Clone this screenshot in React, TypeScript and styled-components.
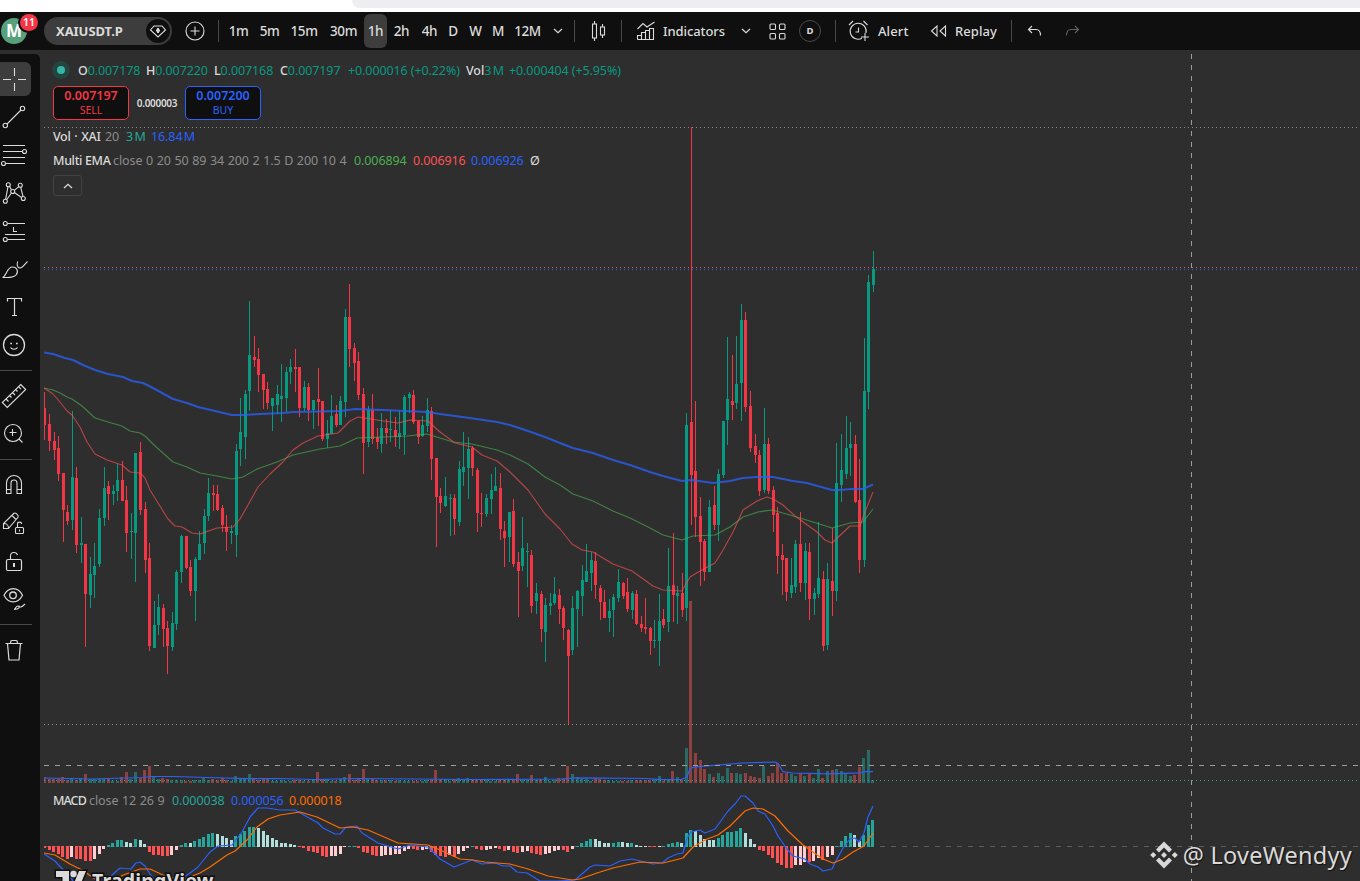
import type { ReactNode } from "react";
import styled, { createGlobalStyle } from "styled-components";

const GREEN = "#089981";
const RED = "#f23645";
const BLUE = "#2962ff";
const ORANGE = "#ff6d00";

// one candle per entry: direction, high, body top, body bottom, low
const CANDLES = `
r392,408,425,440 r414,424,441,451 r432,441,450,460 r436,448,474,481 r473,473,510,542 r505,512,521,525
g411,477,520,530 r467,478,545,553 g517,543,545,563 r544,544,594,647 g557,574,595,608 g543,566,575,598
g509,518,564,567 g467,488,518,526 r481,486,494,520 g485,491,494,505 g464,480,491,501 r461,480,501,501
r486,500,533,552 g513,531,532,559 g453,453,533,582 r442,452,510,515 r502,509,560,573 r543,558,646,651
g601,625,648,648 g594,607,625,635 r604,608,629,647 r621,628,646,674 g612,623,647,651 g570,572,624,630
g535,536,572,583 r536,536,568,569 r560,567,591,596 g557,559,591,621 g531,544,560,560 g509,516,543,554
g478,493,516,521 r485,493,495,511 r485,494,510,511 r505,508,525,532 r515,527,532,551 g525,531,533,544
g444,451,535,557 g398,432,449,466 g390,394,437,459 g301,355,391,411 r336,357,360,367 r348,359,375,392
r374,374,390,409 r382,389,403,409 g398,398,406,431 g385,394,405,414 g364,396,399,422 g367,372,398,412
g359,367,372,384 r349,367,369,392 r367,367,408,417 g381,387,408,411 r383,387,410,421 g400,400,410,429
r368,399,402,426 r401,401,439,441 g420,433,439,448 g395,416,434,434 r405,414,425,427 g396,401,425,425
g309,317,402,417 r284,317,349,367 r343,348,363,381 r352,361,395,400 r388,394,443,474 g406,410,442,447
r394,410,439,444 r428,437,442,449 g413,428,444,453 r419,428,433,444 g410,429,430,442 r417,430,437,447
g411,433,437,449 g395,397,435,455 g392,394,398,413 r390,395,422,424 r421,421,437,444 g416,425,436,437
g398,410,426,432 r407,411,459,480 r458,458,497,547 r488,496,503,513 g477,496,506,507 g494,498,499,536
r494,498,519,535 g461,469,522,526 g432,467,472,486 g437,449,468,499 r446,448,468,476 r468,470,513,532
r493,513,514,527 g494,498,514,517 g474,490,499,514 g467,486,491,491 r473,488,529,540 r521,531,538,567
g512,512,537,562 r499,511,564,567 r552,562,571,617 g517,548,566,571 g543,551,552,587 r550,555,606,613
g583,593,601,614 r591,594,629,642 g598,605,632,662 g593,603,606,615 g577,594,603,605 r589,595,609,624
r606,608,628,640 r629,630,656,724 g596,608,650,655 g590,591,609,647 g565,580,596,616 g544,571,582,582
g552,560,573,591 r552,561,585,599 r585,588,602,620 r590,602,618,618 g599,611,618,632 g594,597,610,637
g569,582,598,602 r582,583,596,599 r578,592,609,612 g591,593,610,619 r590,594,624,625 r616,624,628,632
r598,627,629,634 r627,628,641,655 g620,640,641,648 g594,621,641,666 r609,619,625,628 g548,586,622,632
r533,585,595,622 g586,593,596,624 r573,593,610,617 g413,425,608,621 r127,422,475,525 r401,471,517,537
r497,516,542,586 r539,541,572,581 g500,507,572,572 r486,505,525,530 g469,474,525,541 g421,421,475,478
g337,399,420,445 r355,401,405,420 g336,384,403,409 g304,320,383,421 r312,320,407,412 r391,406,448,452
r434,446,455,463 r450,455,491,496 g408,444,490,493 r438,444,491,494 r486,490,515,532 r507,513,556,574
r544,555,560,595 r558,558,592,601 g558,585,593,598 g540,544,587,593 r512,544,583,592 g543,551,583,600
r543,552,599,620 g588,593,599,615 g522,578,594,598 r571,579,646,651 g563,579,645,650 r528,581,591,616
g443,483,591,601 g434,470,485,502 g416,448,474,479 g422,444,448,476 r435,444,502,503 r459,500,560,573
g338,391,560,567 g275,282,392,409 g251,269,285,292`
  .trim()
  .split(/\s+/)
  .map((c) => {
    const [high, top, bottom, low] = c.slice(1).split(",").map(Number);
    return { up: c[0] === "g", high, top, bottom, low };
  });

const VOLUMES = [
  6, 4, 4, 4, 6, 3, 5, 3, 5, 9, 4, 4, 4, 4, 4, 2, 2, 6, 11, 4, 11, 5, 13, 17, 6, 4, 5, 4, 3, 3, 3,
  2, 2, 3, 3, 5, 3, 4, 3, 5, 3, 2, 7, 5, 5, 9, 4, 3, 5, 4, 2, 2, 3, 2, 2, 3, 3, 2, 2, 4, 11, 4, 4,
  2, 2, 4, 6, 9, 3, 4, 14, 5, 4, 3, 3, 3, 3, 2, 3, 2, 2, 2, 2, 2, 3, 4, 13, 4, 4, 2, 4, 5, 3, 5, 3,
  3, 3, 3, 2, 2, 4, 3, 3, 3, 9, 3, 3, 8, 3, 4, 6, 2, 3, 5, 4, 17, 9, 6, 4, 4, 2, 5, 4, 3, 3, 2, 2,
  2, 2, 3, 3, 3, 3, 3, 4, 7, 2, 3, 12, 6, 4, 35, 182, 30, 23, 14, 9, 6, 10, 7, 15, 10, 10, 9, 10,
  7, 6, 5, 17, 7, 10, 20, 10, 10, 9, 7, 10, 7, 10, 5, 14, 5, 12, 13, 14, 12, 10, 7, 8, 16, 25, 33, 3,
];

// histogram: colour key + height in thirds of a pixel (G/g rising/falling above, R/r below)
const HISTOGRAM = `
R5 R11 R17 R23 R32 R38 r32 R38 R38 R44 R44 r38 r23 r8 G7 G13 G22 G22 g16 g13 G25 g22 g10 R17 R26 R26
R29 R29 r26 r11 G7 G13 g13 G19 G25 G31 G40 G43 g40 g34 g28 g22 G34 G40 G49 G61 G61 g58 g49 g37 g28
g22 g13 g13 g10 g7 R3 R7 R14 R17 R20 R29 R32 r29 r29 r23 r3 G4 G4 R5 R17 R20 R26 R29 r29 r26 r26 r23
r23 r14 r8 R8 R11 r11 r8 R17 R26 R29 R32 r26 R33 r23 r14 r5 G2 R8 R11 r11 r8 r5 R8 R14 r11 R17 R20
r17 r14 R20 R23 R26 r23 r20 r14 r11 R11 R17 r8 G4 G13 G19 G25 g25 g19 g13 g13 G13 G16 g16 g13 G13 g7
g4 g2 R4 R4 r2 G2 G10 G13 G16 g13 G43 G52 g49 g37 g25 g22 g22 G28 G37 G46 G46 G49 G58 g43 g25 g10
R11 R14 R26 R35 R50 R56 R65 R65 r56 r56 r47 R47 r44 r35 R41 r32 r26 G2 G19 G34 G43 g37 g19 G37 G67
G82`
  .trim()
  .split(/\s+/)
  .map((h) => ({ key: h[0], size: Number(h.slice(1)) / 3 }));

const HIST_COLORS: Record<string, string> = {
  G: "#26a69a",
  g: "#b2dfdb",
  R: "#ff5252",
  r: "#ffcdd2",
};

const EMA_BLUE =
  "44,352.5 53,354 65,358 73,360 83,365 95,370 108,374 123,377 132,381 143,383 153,388 173,399 187,403 198,407 215,411 232,415 243,415 260,414 283,413 293,412 340,411 355,409 383,410 427,412 440,414 455,416 470,418 497,422 510,425 528,431 545,437 560,443 573,448 593,453 613,460 630,465 650,472 663,476 682,481 692,480 713,483 730,481 743,478 757,477 773,477 793,481 807,483 832,490 840,490 852,489 863,489 873,484.5";
const EMA_GREEN =
  "44,388 53,390 60,393 67,397 72,399 82,406 95,418 108,422 122,426 130,431 140,433 145,436 155,446 173,462 187,467 200,473 217,476 232,479 243,477 257,469 277,462 293,455 320,449 340,446 357,438 383,437 407,436 427,434 440,438 453,442 472,444 497,450 510,455 528,464 545,477 560,485 573,494 593,501 613,511 630,518 650,528 663,535 682,540 693,536 715,535 730,527 743,517 758,512 772,510 790,515 813,522 832,528 850,523 863,522 873,509";
const EMA_RED =
  "44,388 53,394 60,402 67,411 72,415 80,427 87,442 95,454 107,460 122,465 130,472 140,473 145,478 150,490 158,503 168,519 175,526 182,527 192,533 200,534 217,528 233,527 240,519 248,505 258,487 270,474 283,462 293,450 303,443 318,436 338,433 350,421 358,417 377,420 398,423 410,420 428,421 440,432 455,443 472,447 482,455 497,461 510,472 528,490 545,514 560,529 572,544 582,550 593,552 613,564 632,571 653,586 663,590 682,591 690,577 700,571 715,563 723,550 733,532 743,510 757,501 767,497 773,499 783,505 795,516 817,532 825,540 832,543 850,526 860,526 865,512 873,492";
const VOLUME_MA =
  "44,778 90,779 143,777.5 153,776.5 173,776.5 207,777.5 247,778.7 280,778.5 313,779.5 360,778.5 470,779.5 560,779 577,777.8 647,778.5 660,779.7 681,779.5 687,777 690,768.5 695,766.8 743,763 775,762 778,763.5 783,771.7 793,773 827,773.8 860,772.8 865,771.5 873,771.7";
const MACD_LINE =
  "44,854 55,861 65,872 76,884 100,886 112,875 120,868 131,869 136,863 140,862 145,866 152,877 160,884 180,880 190,873 198,867 210,852 218,846 232,845 242,832 250,817 258,808 267,808 280,810 295,810 302,814 318,823 323,828 335,834 340,834 346,827 357,826 362,833 378,843 398,849 410,845 428,847 440,859 454,867 472,860 482,864 495,863 503,866 510,866 517,872 527,873 540,881 557,881 575,880 590,867 595,865 610,866 620,861 632,859 653,864 662,863 668,858 677,854 683,853 687,838 691,832 700,830 705,833 715,829 728,811 735,804 741,796 745,796 753,803 758,811 765,814 773,826 778,836 787,849 793,856 805,859 810,864 818,867 823,871 832,869 837,859 843,848 850,839 855,838 859,842 864,833 868,817 873,806";
const SIGNAL_LINE =
  "44,853 55,855 70,864 82,870 95,879 105,884 115,880 123,875 140,869 150,869 163,875 173,878 185,879 200,873 210,867 227,855 235,851 247,840 257,827 268,819 280,815 300,812 317,817 340,828 353,827 368,830 398,843 428,845 440,850 460,859 473,860 485,862 510,864 528,869 548,876 572,880 580,879 597,873 613,868 640,862 663,863 683,858 693,847 707,839 718,835 730,826 745,811 753,808 763,809 775,816 788,831 803,845 823,859 833,863 843,859 853,852 864,846 873,833";

const PITCH = 4.5521;
const candleX = (i: number) => Math.floor(44.9 + PITCH * i);
const barX = (i: number) => Math.floor(44.5 + PITCH * i);

const INTERVALS = [
  { label: "1m", width: 31 },
  { label: "5m", width: 31 },
  { label: "15m", width: 38 },
  { label: "30m", width: 41 },
  { label: "1h", width: 23, active: true },
  { label: "2h", width: 29 },
  { label: "4h", width: 27 },
  { label: "D", width: 20 },
  { label: "W", width: 25 },
  { label: "M", width: 20 },
  { label: "12M", width: 39 },
];

function Icon({ w, h, children }: { w: number; h: number; children: ReactNode }) {
  return (
    <svg
      width={w}
      height={h}
      viewBox={`0 0 ${w} ${h}`}
      fill="none"
      stroke="#dbdbdb"
      strokeWidth={1.1}
    >
      {children}
    </svg>
  );
}

function Chevron({ up }: { up?: boolean }) {
  return (
    <Icon w={10} h={6}>
      <path d={up ? "M1 5 L5 1.3 L9 5" : "M1 1 L5 4.7 L9 1"} strokeWidth={1.2} />
    </Icon>
  );
}

const TOOLS: (ReactNode | "divider")[] = [
  <path d="M3 19.5h8M18 19.5h8M14.5 8v8M14.5 23v8" />,
  <>
    <circle cx="5.3" cy="27.5" r="2.2" />
    <circle cx="22.5" cy="10.5" r="2.2" />
    <path d="M7 26 L21 12" />
  </>,
  <>
    <path d="M3 9.5h22M3 15.5h19M3 21.5h22M6 27.5h19" />
    <circle cx="24.5" cy="15.5" r="2" />
    <circle cx="3.5" cy="27.5" r="2" />
  </>,
  <>
    <circle cx="8.3" cy="10.7" r="2" />
    <circle cx="20.3" cy="11.3" r="2" />
    <circle cx="12.7" cy="17.5" r="2" />
    <circle cx="5.3" cy="27.3" r="2" />
    <circle cx="23.3" cy="24.5" r="2" />
    <path d="M5.6 25.3 L8 12.7M9.5 12.3 L11.5 16M14.3 16.3 L18.8 12.6M20.7 13.3 L23 22.5M11.5 19 L6.6 25.7M14.4 18.5 L21.5 23.5" />
  </>,
  <>
    <circle cx="5.3" cy="11.5" r="2" />
    <circle cx="5.3" cy="27.5" r="2" />
    <path d="M7.5 11.5H25M5 22.5H25M7.5 27.5H25M13.5 15v4.5H17" />
  </>,
  <path d="M2.5 27.5C6.5 26 7 17 12.5 17c4.5 0 6.500 4.5 3.5 8-2 2.5-6 2.5-13.5 2.5M17.8 11.5c-1.3 2.5-.8 6.3 2.2 6.5 2.5.2 4.5-3.5 7.5-6.5" />,
  <path d="M7.5 13.5v-3h14v3M14.5 10.5v17M12 27.5h5" strokeWidth={1.2} />,
  <>
    <circle cx="14" cy="19" r="10.5" strokeWidth={1.3} />
    <path d="M10.5 21.5c1.5 2.3 5.5 2.3 7 0" />
    <path d="M10.3 17.5h1.7M16 17.5h1.7" strokeWidth={1.6} />
  </>,
  "divider",
  <path d="M20.7 7.5 L25.7 12.5 L7.3 30.5 L2.3 25.5ZM6 22l2.5 2.5M9.5 18.5l2 2M12.5 15.5l2.5 2.5M15.5 12.5l2 2M18.5 9.7l2.5 2.5" />,
  <>
    <circle cx="13" cy="18" r="8.5" />
    <path d="M9.500 17.5h7M12.5 14v7M19 24l3.5 3.5" />
  </>,
  "divider",
  <path d="M6.5 27.5V17a7.5 7.5 0 0 1 15 0v10.5H17V17a3 3 0 0 0-6 0v10.5ZM6.5 23.5H11M17 23.5h4.5" />,
  <>
    <path d="M3.5 24.5v-5L14 9.3c1.5-1 5 2 4 4L8.5 24.5ZM4 19.5c2.5 0 4.5 2 4.5 4.5M12 11.5l4 4" />
    <rect x="15.5" y="23.5" width="8" height="6" rx="1" />
    <path d="M17.5 23v-3c0-2.5 4-2.5 4 0M19.5 25.5v2" />
  </>,
  <>
    <rect x="6.5" y="17.5" width="15" height="11" rx="1.5" strokeWidth={1.2} />
    <path d="M10.5 17v-3c0-4.5 6-4.5 7-1" />
    <path d="M14 21v4" strokeWidth={2} />
  </>,
  <>
    <path d="M4 15.3c4.5-8.8 14-8.8 18.5 0-4.5 8.8-14 8.8-18.5 0Z" strokeWidth={1.2} />
    <circle cx="13" cy="15.3" r="3.3" strokeWidth={1.3} />
    <path d="M14 29.5c2-.5 1.5-3.5 4-3.5 2.5.5 1.500 3.5-4 3.5M19 25.500c0 2.5 2.500 2 6-1.500" />
  </>,
  "divider",
  <path
    d="M5.5 12.5h17M10.5 12.5c0-3.5 1-3 3.5-3s3.5-.5 3.5 3M7.5 12.5l1.5 16.5h10l1.5-16.5"
    strokeWidth={1.2}
  />,
];

function PriceChart() {
  return (
    <ChartSvg viewBox="44 54 1316 827" shapeRendering="crispEdges">
      <g strokeDasharray="1 3" stroke="#8c8c8c">
        <path d="M44 127.5H1360" />
        <path d="M44 724.5H1360" />
        <path d="M44 267.5H1360" stroke="#ff5252" />
        <path d="M44 269.5H1360" stroke={BLUE} />
      </g>
      {VOLUMES.map((v, i) => (
        <rect
          key={i}
          x={barX(i) - 1}
          y={783 - v}
          width={3}
          height={v}
          fill={CANDLES[i].up ? "#26a69a" : "#ef5350"}
          opacity={0.5}
        />
      ))}
      {CANDLES.map((c, i) => (
        <g key={i} fill={c.up ? GREEN : RED}>
          <rect x={candleX(i)} y={c.high} width={1} height={c.low - c.high} />
          <rect x={candleX(i) - 1} y={c.top} width={3} height={c.bottom - c.top} />
        </g>
      ))}
      <g fill="none" shapeRendering="auto" strokeLinejoin="round">
        <polyline points={EMA_GREEN} stroke="#4caf50" strokeWidth={1.1} opacity={0.65} />
        <polyline points={EMA_RED} stroke="#ff5252" strokeWidth={1.1} opacity={0.65} />
        <polyline points={EMA_BLUE} stroke={BLUE} strokeWidth={2} opacity={0.75} />
        <polyline points={VOLUME_MA} stroke={BLUE} strokeWidth={1.2} />
      </g>
      <path d="M44 780.5H1360" stroke="#26a69a" strokeDasharray="1 3" />
      <path d="M44 846.5H1360" stroke="#5c5c5c" strokeDasharray="5 6" />
      {HISTOGRAM.map(({ key, size }, i) => {
        const h = Math.max(1, Math.round(size));
        const above = key === "G" || key === "g";
        return (
          <rect
            key={i}
            x={barX(i) - 1}
            y={above ? 847 - h : 846}
            width={3}
            height={h}
            fill={HIST_COLORS[key]}
          />
        );
      })}
      <g fill="none" shapeRendering="auto" strokeLinejoin="round" strokeWidth={1.2}>
        <polyline points={MACD_LINE} stroke={BLUE} />
        <polyline points={SIGNAL_LINE} stroke={ORANGE} />
      </g>
      <g stroke="#9c9c9c" strokeDasharray="5 6">
        <path d="M44 765.5H1360" />
        <path d="M1191.5 54V881" />
      </g>
    </ChartSvg>
  );
}

export default function App() {
  return (
    <Page>
      <GlobalStyle />
      <BrowserStrip>
        <AddressBar />
      </BrowserStrip>
      <TopBar>
        <AvatarCell>
          <Avatar>M</Avatar>
          <Badge>11</Badge>
        </AvatarCell>
        <SymbolPill>
          XAIUSDT.P
          <GemButton>
            <Icon w={18} h={16}>
              <path d="M5 3h8l3.5 4L9 14 1.5 7Z" />
              <path d="M9 5v5M7 7.5h4" strokeWidth={2} />
            </Icon>
          </GemButton>
        </SymbolPill>
        <Cell $w={45}>
          <Icon w={20} h={20}>
            <circle cx="10" cy="10" r="9" />
            <path d="M10 5.5v9M5.5 10h9" />
          </Icon>
        </Cell>
        <Cell $w={1} />
        <Separator />
        <Intervals>
          {INTERVALS.map((it) => (
            <Interval key={it.label} $w={it.width} $active={it.active}>
              {it.label}
            </Interval>
          ))}
        </Intervals>
        <Cell $w={22}>
          <Chevron />
        </Cell>
        <Cell $w={5} />
        <Separator />
        <Cell $w={46}>
          <Icon w={16} h={22}>
            <path d="M4.5 1v3M4.5 18v3M12.5 4v3M12.5 15v3" />
            <rect x="2.5" y="4" width="4" height="14" />
            <rect x="10.5" y="7" width="4" height="8" />
          </Icon>
        </Cell>
        <Separator />
        <Cell $w={41} $left={14}>
          <Icon w={20} h={20}>
            <path d="M1.5 8 L7 2.5 L11 6 L18.5 1M1.5 18.5v-4h4v-3h4v-2h4v3M1.5 18.5h16v-11h-4v11M5.5 14.5v4M9.5 10v8.5" />
          </Icon>
        </Cell>
        <BarText $w={74} $spacing={-0.1}>
          Indicators
        </BarText>
        <Cell $w={18}>
          <Chevron />
        </Cell>
        <Cell $w={44}>
          <Icon w={17} h={17}>
            <rect x="1" y="1" width="5.5" height="5.5" rx="1" />
            <rect x="10.5" y="1" width="5.5" height="5.5" rx="1" />
            <rect x="1" y="10.5" width="5.5" height="5.5" rx="1" />
            <rect x="10.5" y="10.5" width="5.5" height="5.5" rx="1" />
          </Icon>
        </Cell>
        <LayoutBadge>D</LayoutBadge>
        <Cell $w={14} />
        <Separator />
        <Cell $w={42} $left={12}>
          <Icon w={22} h={22}>
            <path d="M14 18.3A8 8 0 1 1 18 13M10.5 7.5v4.5h-3M17 13v8M13 17h8M1 5l4-4M15.5 1l4 4" />
          </Icon>
        </Cell>
        <BarText $w={51} $spacing={0.1}>
          Alert
        </BarText>
        <Cell $w={26} $left={1}>
          <Icon w={17} h={14}>
            <path d="M7 2v10L1.5 7ZM15.5 2v10L10 7Z" />
          </Icon>
        </Cell>
        <BarText $w={56} $spacing={0.05}>
          Replay
        </BarText>
        <Separator />
        <Cell $w={45}>
          <Icon w={15} h={12}>
            <path d="M5 1 L1.5 4.5 L5 8M1.5 4.5H9c3 0 4.5 2 4.5 6" />
          </Icon>
        </Cell>
        <Cell $w={30} $dim>
          <Icon w={15} h={12}>
            <path d="M10 1 L13.5 4.5 L10 8M13.5 4.5H6c-3 0-4.5 2-4.5 6" />
          </Icon>
        </Cell>
      </TopBar>
      <Workspace>
        <Sidebar>
          {TOOLS.map((tool, i) =>
            tool === "divider" ? (
              <Divider key={i} />
            ) : (
              <Tool key={i} $active={i === 0}>
                <Icon w={31} h={38}>
                  {tool}
                </Icon>
              </Tool>
            )
          )}
        </Sidebar>
        <ChartPane>
          <PriceChart />
          <Legend>
            <LegendRow $h={32}>
              <StatusDot />
              <Value $w={68} $c={GREEN}>
                <b>O</b>0.007178
              </Value>
              <Value $w={68} $c={GREEN}>
                <b>H</b>0.007220
              </Value>
              <Value $w={66} $c={GREEN}>
                <b>L</b>0.007168
              </Value>
              <Value $w={68} $c={GREEN}>
                <b>C</b>0.007197
              </Value>
              <Value $w={118} $c={GREEN}>
                +0.000016 (+0.22%)
              </Value>
              <Value $w={43} $c={GREEN} $word={-1.6}>
                <b>Vol</b>3 M
              </Value>
              <Value $w={120} $c={GREEN}>
                +0.000404 (+5.95%)
              </Value>
            </LegendRow>
            <TradeRow>
              <TradeButton $c={RED}>
                <strong>0.007197</strong>
                SELL
              </TradeButton>
              <Spread>0.000003</Spread>
              <TradeButton $c={BLUE}>
                <strong>0.007200</strong>
                BUY
              </TradeButton>
            </TradeRow>
            <LegendRow $h={24}>
              <Value $w={52} $c="#dbdbdb" $strong $word={1}>
                Vol · XAI
              </Value>
              <Value $w={21} $c="#8c8c8c">
                20
              </Value>
              <Value $w={25} $c="#26a69a" $word={-1.6}>
                3 M
              </Value>
              <Value $w={60} $c={BLUE} $word={-1.8}>
                16.84 M
              </Value>
            </LegendRow>
            <LegendRow $h={24}>
              <Value $w={60} $c="#dbdbdb" $strong>
                Multi EMA
              </Value>
              <Value $w={241} $c="#8c8c8c" $word={0.5}>
                close 0 20 50 89 34 200 2 1.5 D 200 10 4
              </Value>
              <Value $w={59} $c="#4caf50">
                0.006894
              </Value>
              <Value $w={58} $c="#ff5252">
                0.006916
              </Value>
              <Value $w={59} $c={BLUE}>
                0.006926
              </Value>
              <Value $w={12} $c="#dbdbdb">
                Ø
              </Value>
            </LegendRow>
            <CollapseButton>
              <Chevron up />
            </CollapseButton>
          </Legend>
          <BottomLegend>
            <LegendRow $h={24}>
              <Value $w={36} $c="#dbdbdb" $strong $tight>
                MACD
              </Value>
              <Value $w={83} $c="#8c8c8c" $word={0.5}>
                close 12 26 9
              </Value>
              <Value $w={59} $c="#26a69a">
                0.000038
              </Value>
              <Value $w={58} $c={BLUE}>
                0.000056
              </Value>
              <Value $w={60} $c={ORANGE}>
                0.000018
              </Value>
            </LegendRow>
          </BottomLegend>
          <Brand>
            <svg width="34" height="24" viewBox="0 0 34 24">
              <path
                d="M2 3h13v17H8.5V9H2ZM25 3h7l-7 17h-7Z"
                fill="#dbdbdb"
                stroke="#0f0f0f"
                strokeWidth="3"
                paintOrder="stroke"
              />
              <circle cx="19.5" cy="6" r="3.2" fill="#dbdbdb" />
            </svg>
            TradingView
          </Brand>
          <Watermark>
            <svg width="28" height="28" viewBox="0 0 28 28" fill="#d9d9d9">
              <path d="M14 .5l8 8-3 3-5-5-5 5-3-3ZM14 27.5l8-8-3-3-5 5-5-5-3 3ZM14 11l3 3-3 3-3-3ZM3.2 11l3 3-3 3-3-3ZM24.8 11l3 3-3 3-3-3Z" />
            </svg>
            @ LoveWendyy
          </Watermark>
        </ChartPane>
      </Workspace>
    </Page>
  );
}

const GlobalStyle = createGlobalStyle`
  * {
    box-sizing: border-box;
  }
  body {
    margin: 0;
    overflow: hidden;
    background: #2e2e2e;
    font-family: "Noto Sans", "Open Sans", sans-serif;
  }
  svg {
    display: block;
    flex-shrink: 0;
  }
`;

const Page = styled.div`
  width: 1360px;
  height: 881px;
  display: flex;
  flex-direction: column;
  overflow: hidden;
  background: #2e2e2e;
`;

const BrowserStrip = styled.div`
  height: 12px;
  padding-left: 352px;
  background: #ffffff;
`;

const AddressBar = styled.div`
  height: 8px;
  background: #ededf2;
  border-bottom-left-radius: 8px;
`;

const TopBar = styled.header`
  height: 38px;
  display: flex;
  align-items: center;
  background: #0f0f0f;
  color: #dbdbdb;
`;

const AvatarCell = styled.div`
  position: relative;
  width: 44px;
  padding-left: 1px;
`;

const Avatar = styled.div`
  width: 26px;
  height: 26px;
  border-radius: 50%;
  background: #58a07c;
  color: #ffffff;
  font-size: 17px;
  font-weight: 700;
  line-height: 26px;
  text-align: center;
`;

const Badge = styled.div`
  position: absolute;
  left: 20px;
  top: -4px;
  width: 18px;
  height: 17px;
  border-radius: 9px;
  background: #f23645;
  box-shadow: 0 0 0 2px #0f0f0f;
  color: #ffffff;
  font-size: 10.5px;
  font-weight: 600;
  line-height: 16px;
  text-align: center;
`;

const SymbolPill = styled.div`
  width: 128px;
  height: 28px;
  display: flex;
  align-items: center;
  justify-content: space-between;
  padding: 0 2px 0 12px;
  border-radius: 14px;
  background: #3d3d3d;
  font-size: 13px;
  font-weight: 700;
  letter-spacing: -0.05px;
`;

const GemButton = styled.div`
  width: 24px;
  height: 24px;
  display: grid;
  place-items: center;
  border-radius: 50%;
  background: #0f0f0f;
`;

const Cell = styled.div<{ $w: number; $left?: number; $dim?: boolean }>`
  width: ${({ $w }) => $w}px;
  display: flex;
  align-items: center;
  justify-content: ${({ $left }) => ($left ? "flex-start" : "center")};
  padding-left: ${({ $left }) => $left ?? 0}px;
  opacity: ${({ $dim }) => ($dim ? 0.4 : 1)};
`;

const Separator = styled.div`
  width: 1px;
  height: 22px;
  background: #4a4a4a;
`;

const Intervals = styled.nav`
  display: flex;
  margin-left: 4px;
`;

const Interval = styled.div<{ $w: number; $active?: boolean }>`
  width: ${({ $w }) => $w}px;
  height: 34px;
  border-radius: 6px;
  background: ${({ $active }) => ($active ? "#3d3d3d" : "transparent")};
  font-size: 13.5px;
  font-weight: 500;
  letter-spacing: -0.4px;
  line-height: 34px;
  text-align: center;
  white-space: nowrap;
`;

const BarText = styled.div<{ $w: number; $spacing: number }>`
  width: ${({ $w }) => $w}px;
  font-size: 13px;
  font-weight: 500;
  letter-spacing: ${({ $spacing }) => $spacing}px;
  white-space: nowrap;
`;

const LayoutBadge = styled.div`
  width: 22px;
  height: 22px;
  border: 1px solid #4a4a4a;
  border-radius: 50%;
  font-size: 9.5px;
  font-weight: 700;
  line-height: 20px;
  text-align: center;
`;

const Workspace = styled.div`
  flex: 1;
  min-height: 0;
  display: flex;
  gap: 4px;
  padding-top: 4px;
`;

const Sidebar = styled.aside`
  width: 40px;
  padding-top: 6px;
  border-top-right-radius: 5px;
  background: #0f0f0f;
`;

const Tool = styled.div<{ $active: boolean }>`
  width: 31px;
  height: 38px;
  background: ${({ $active }) => ($active ? "#3d3d3d" : "transparent")};
  clip-path: ${({ $active }) => ($active ? "inset(2px 0 2px 0 round 0 6px 6px 0)" : "none")};
`;

const Divider = styled.div`
  width: 32px;
  height: 1px;
  margin: 6px 0;
  background: #4a4a4a;
`;

const ChartPane = styled.main`
  position: relative;
  width: 1316px;
  overflow: hidden;
`;

const ChartSvg = styled.svg`
  position: absolute;
  inset: 0;
  width: 1316px;
  height: 827px;
`;

const Legend = styled.section`
  position: relative;
  padding-left: 9px;
`;

const BottomLegend = styled.section`
  position: absolute;
  left: 9px;
  top: 734px;
`;

const LegendRow = styled.div<{ $h: number }>`
  height: ${({ $h }) => $h}px;
  display: flex;
  align-items: center;
`;

type ValueProps = {
  $w: number;
  $c: string;
  $strong?: boolean;
  $tight?: boolean;
  $word?: number;
};

const Value = styled.span<ValueProps>`
  width: ${({ $w }) => $w}px;
  flex-shrink: 0;
  color: ${({ $c }) => $c};
  font-size: 12.5px;
  font-weight: ${({ $strong }) => ($strong ? 500 : 400)};
  letter-spacing: ${({ $strong, $tight }) => ($tight ? -0.9 : $strong ? -0.35 : -0.1)}px;
  word-spacing: ${({ $word }) => $word ?? 0}px;
  white-space: nowrap;

  b {
    color: #dbdbdb;
    font-weight: 500;
  }
`;

const StatusDot = styled.i`
  width: 18px;
  height: 18px;
  margin: 0 8px 0 -1px;
  border: 5px solid #24453f;
  border-radius: 50%;
  background: #35b5a5;
`;

const TradeRow = styled.div`
  height: 34px;
  display: flex;
  align-items: center;
  margin-bottom: 4px;
`;

const TradeButton = styled.div<{ $c: string }>`
  width: 76px;
  height: 34px;
  display: flex;
  flex-direction: column;
  align-items: center;
  border: 1px solid ${({ $c }) => $c};
  border-radius: 5px;
  background: #0f0f0f;
  color: ${({ $c }) => $c};
  font-size: 10.5px;
  line-height: 13px;

  strong {
    font-size: 12.5px;
    font-weight: 600;
    line-height: 17px;
  }
`;

const Spread = styled.div`
  width: 56px;
  color: #dbdbdb;
  font-size: 10px;
  font-weight: 600;
  letter-spacing: -0.3px;
  text-align: center;
`;

const CollapseButton = styled.div`
  width: 29px;
  height: 21px;
  display: grid;
  place-items: center;
  margin-top: 3px;
  border: 1px solid #434343;
  border-radius: 3px;
`;

const Brand = styled.div`
  position: absolute;
  left: 10px;
  top: 814px;
  display: flex;
  align-items: flex-start;
  gap: 4px;
  color: #dbdbdb;
  font-size: 19.5px;
  font-weight: 700;
  letter-spacing: 0.15px;
  line-height: 25px;
  -webkit-text-stroke: 3px #0f0f0f;
  paint-order: stroke;
`;

const Watermark = styled.div`
  position: absolute;
  right: 8px;
  top: 785px;
  display: flex;
  align-items: center;
  gap: 5px;
  color: #d9d9d9;
  font-size: 23.5px;
  letter-spacing: 0.27px;
  line-height: 32px;
  text-shadow: 1px 1px 1px #111111;
`;
